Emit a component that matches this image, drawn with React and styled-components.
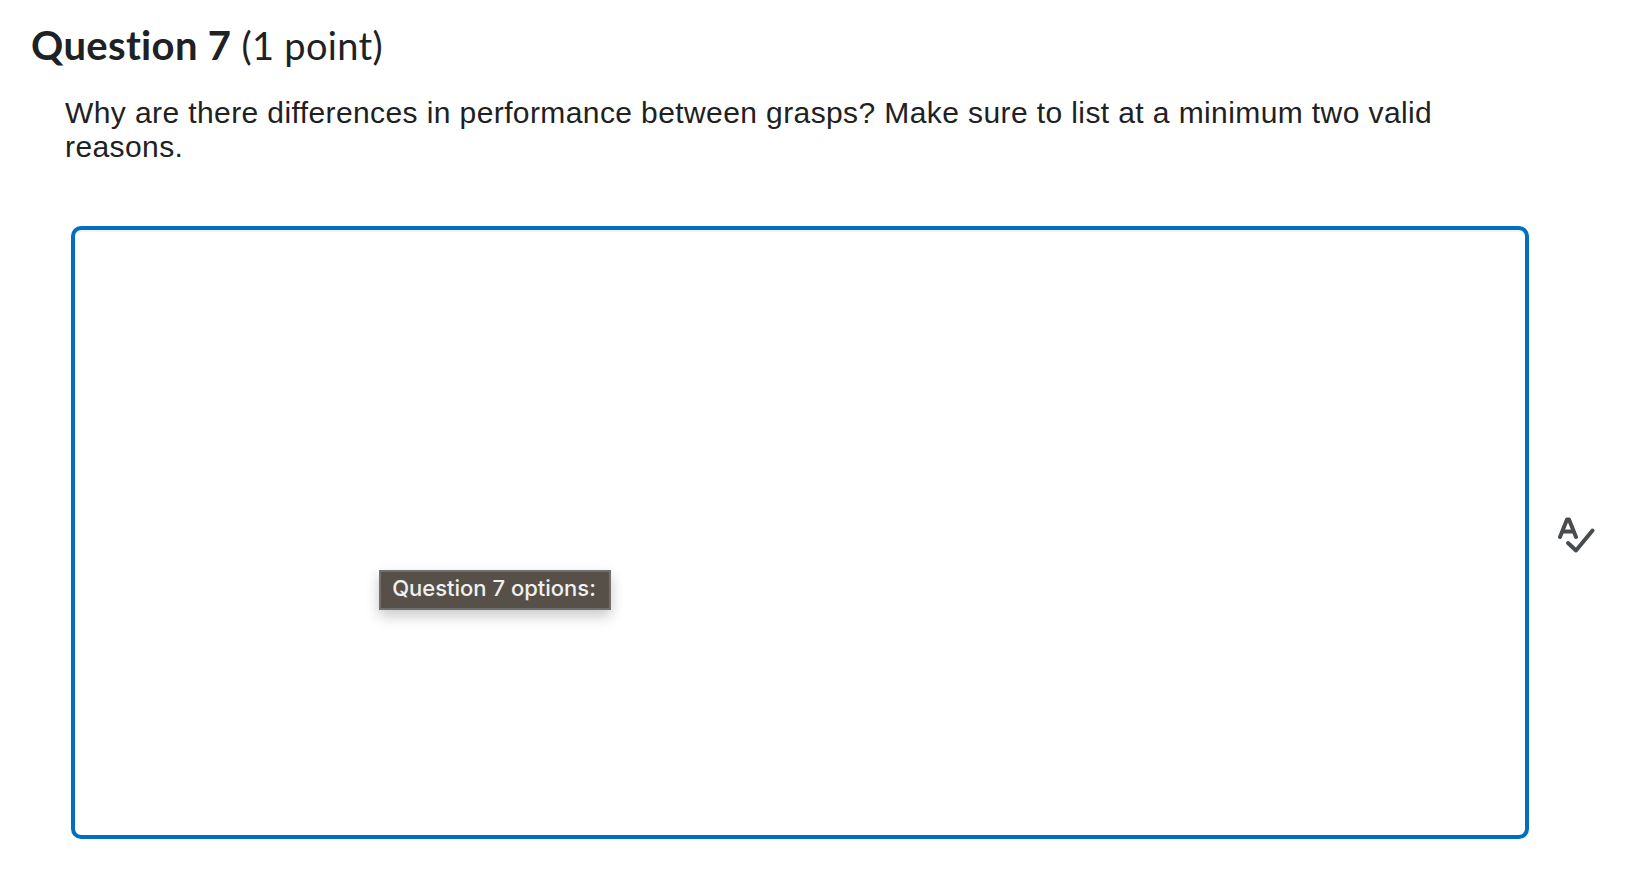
import React from "react";
import styled, { createGlobalStyle } from "styled-components";

const Global = createGlobalStyle`
  html, body { margin: 0; padding: 0; background: #fff; }
  body { overflow: hidden; }
`;

const Page = styled.main`
  width: 1646px;
  height: 876px;
  box-sizing: border-box;
  padding: 21px 0 0 31px;
  color: #202122;
  position: relative;
`;

const Heading = styled.h2`
  margin: 0;
  font-family: Lato, sans-serif;
  font-size: 40px;
  line-height: 48px;
  font-weight: 700;
  letter-spacing: 0.33px;
  font-variant-ligatures: none;
`;

const Points = styled.span`
  font-weight: 400;
  font-size: 38px;
`;

const Prompt = styled.p`
  margin: 27px 0 0 34px;
  width: 1400px;
  font-family: "Liberation Sans", Arial, sans-serif;
  font-size: 30px;
  letter-spacing: 0.4px;
  line-height: 34px;
  font-variant-ligatures: none;
`;

const AnswerRow = styled.div`
  display: flex;
  align-items: center;
  margin: 62px 0 0 40px;
  gap: 29px;
`;

const AnswerBox = styled.div`
  width: 1458px;
  height: 613px;
  box-sizing: border-box;
  border: 4px solid #006fbf;
  border-radius: 10px;
  box-shadow: inset 0 2px 0 0 #f1f2f3;
  background: #fff;
`;

const SpellIcon = styled.svg`
  width: 38px;
  height: 38px;
  margin-top: 6px;
  flex: none;
`;

const Tooltip = styled.div`
  position: absolute;
  left: 379px;
  top: 570px;
  width: 232px;
  height: 40px;
  box-sizing: border-box;
  display: flex;
  align-items: center;
  justify-content: center;
  background: #565048;
  border: 2px solid #6f6f6f;
  color: #f0f0f0;
  font-family: Inter, sans-serif;
  font-size: 22px;
  font-weight: 500;
  padding: 0 2px 4px 0;
  box-shadow: 0 6px 14px rgba(0, 0, 0, 0.22);
`;

export default function App() {
  return (
    <>
      <Global />
      <Page>
        <Heading>
          Question 7 <Points>(1 point)</Points>
        </Heading>
        <Prompt>
          Why are there differences in performance between grasps? Make sure to list at a minimum two valid reasons.
        </Prompt>
        <AnswerRow>
          <AnswerBox />
          <SpellIcon viewBox="0 0 38 38" fill="none" stroke="#494c4e" strokeWidth="4" strokeLinecap="round" strokeLinejoin="round">
            <path d="M2 20 L9 2.5 H11 L18 20" />
            <path d="M5 14.5 H15" />
            <path d="M10 26 L18 33.5 L34.5 13.5" />
          </SpellIcon>
        </AnswerRow>
        <Tooltip>Question 7 options:</Tooltip>
      </Page>
    </>
  );
}
